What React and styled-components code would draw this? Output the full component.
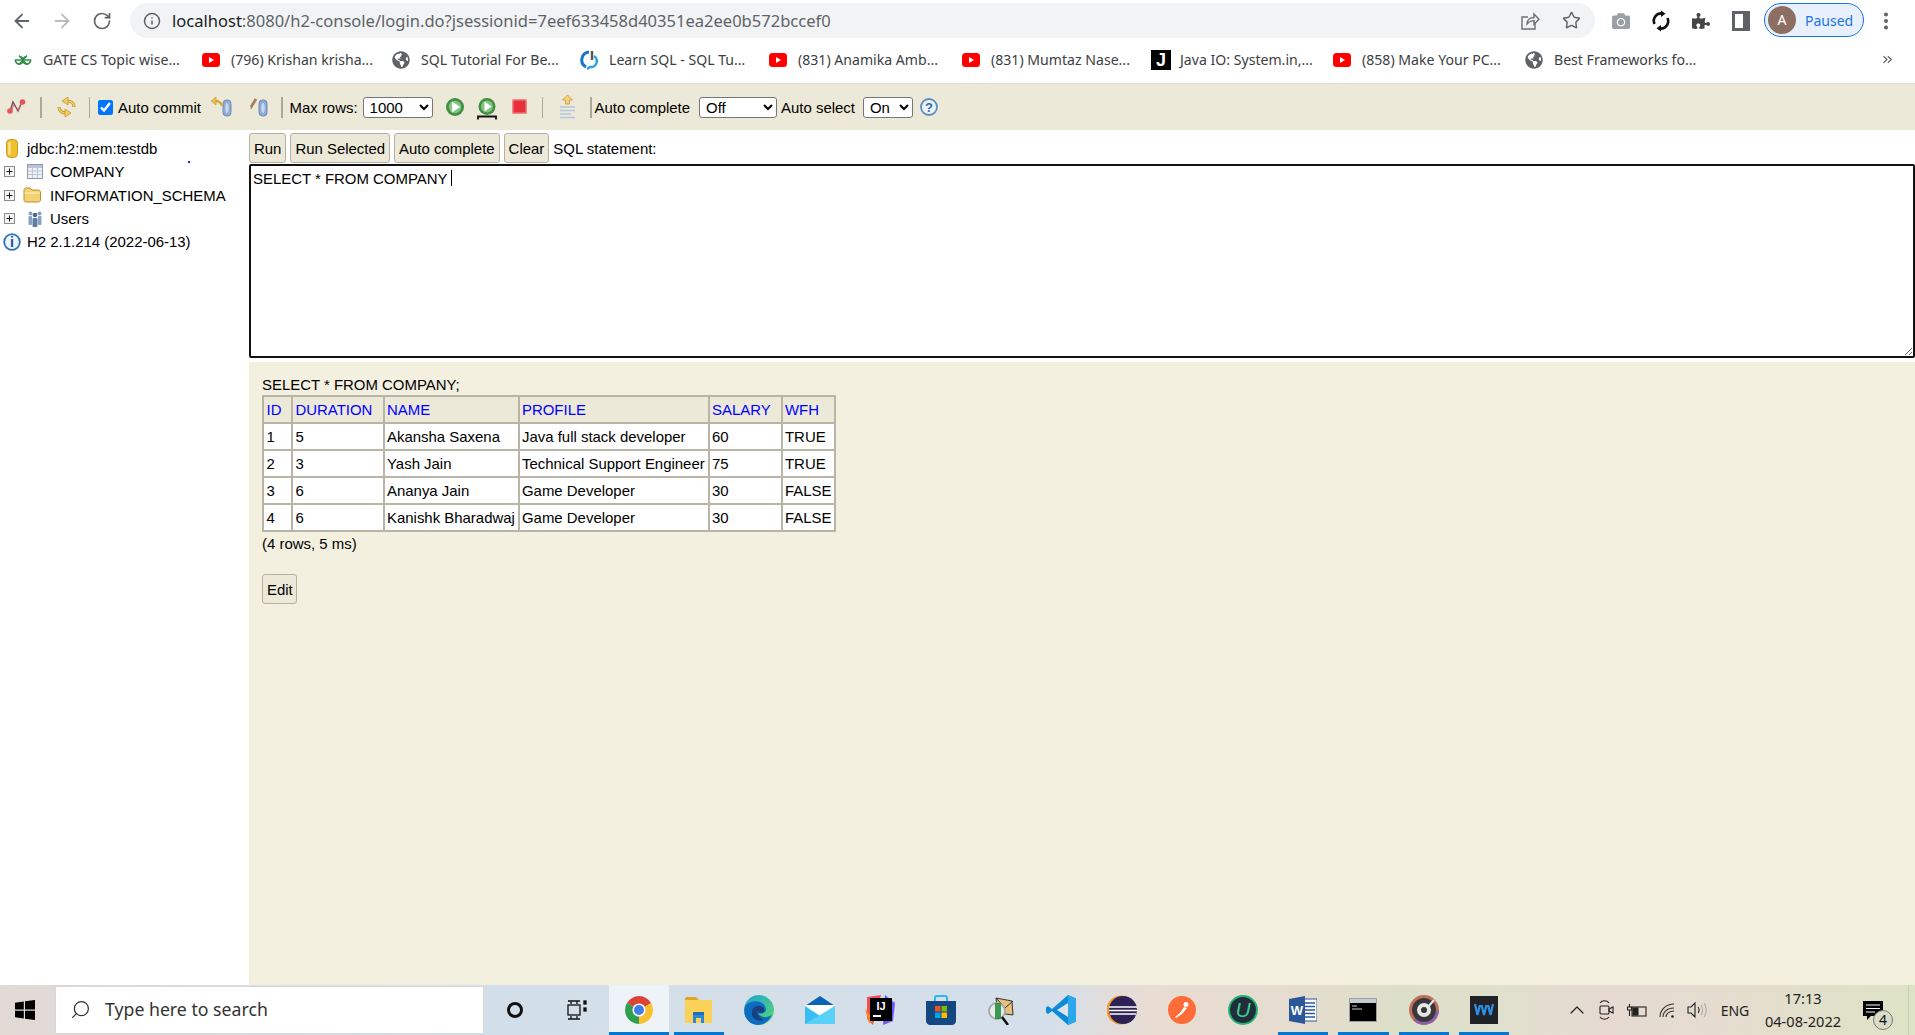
import React from 'react';
import styled, { createGlobalStyle } from 'styled-components';
import { ArrowLeft, ArrowRight, RotateCw, Info, Star, MoreVertical, ChevronUp, ChevronsRight, Search } from 'lucide-react';
import { FaGlobeAmericas, FaPuzzlePiece, FaCamera } from 'react-icons/fa';

const GlobalStyle = createGlobalStyle`
  html, body { margin: 0; padding: 0; height: 100%; background: #fff; overflow: hidden; }
  * { box-sizing: border-box; }
`;

const uiFont = `"Noto Sans", "Open Sans", sans-serif`;
const h2Font = `"Liberation Sans", Arial, sans-serif`;
const h2Size = '14.95px';

/* ---------- small drawn icons ---------- */

const YoutubeIcon = () => (
  <svg width="18" height="14" viewBox="0 0 18 14">
    <rect width="18" height="14" rx="3.5" fill="#f00" />
    <path d="M7 4l5 3-5 3z" fill="#fff" />
  </svg>
);

const GfgIcon = () => (
  <svg width="18" height="12" viewBox="0 0 18 12" fill="none" stroke="#2f8d46" strokeWidth="1.7">
    <path d="M9 6H16.5A3.8 3.8 0 1 1 12.5 2.5" />
    <path d="M9 6H1.5A3.8 3.8 0 1 0 5.5 2.5" />
    <path d="M5 10.5L13 1.5M13 10.5L5 1.5" strokeWidth="1.2" />
  </svg>
);

const LearnIcon = () => (
  <svg width="18" height="22" viewBox="0 0 18 22" fill="none">
    <path d="M9 3A8 8 0 0 0 6 18" stroke="#1976c9" strokeWidth="3" />
    <path d="M12 2V11" stroke="#555" strokeWidth="2.4" />
    <path d="M14 7A6 6 0 0 1 10 18L7 20" stroke="#29a3e0" strokeWidth="2.4" />
  </svg>
);

const JBox = styled.span`
  flex: none;
  width: 20px;
  height: 20px;
  margin-right: -2px;
  background: #000;
  color: #fff;
  font: bold 18px/20px ${h2Font};
  text-align: center;
`;

const ShareIcon = () => (
  <svg width="20" height="20" viewBox="0 0 20 20" fill="none" stroke="#6b6f73" strokeWidth="1.4">
    <path d="M15 11.5V18H2V6h6" />
    <path d="M7 13c0-4 3-6.5 7-6.5V3l5 5.3-5 5V9.6c-3 0-5 1-7 3.4z" />
  </svg>
);

const SyncIcon = () => (
  <svg width="20" height="22" viewBox="0 0 20 22" fill="none" stroke="#111" strokeWidth="2.6">
    <path d="M3.5 14A7.5 7.5 0 0 1 12 3.6" />
    <path d="M16.5 8A7.5 7.5 0 0 1 8 18.4" />
    <path d="M10 .5l4.5 3.2L10 7zM10 21.5l-4.5-3.2L10 15z" fill="#111" strokeWidth="0" />
  </svg>
);

const PanelIcon = () => (
  <svg width="18" height="20" viewBox="0 0 18 20" fill="none">
    <rect x="1.5" y="1.5" width="15" height="17" stroke="#5f6368" strokeWidth="3" />
    <rect x="11" y="2" width="5" height="16" fill="#5f6368" />
  </svg>
);

const DisconnectIcon = () => (
  <svg width="19" height="16" viewBox="0 0 19 16" fill="none">
    <path d="M3 12L6 3l5 9 4-9" stroke="#7a4a52" strokeWidth="1.4" />
    <path d="M7 6l-3 6M11 12l3-8" stroke="#d9606c" strokeWidth="1" />
    <circle cx="3" cy="12" r="2.8" fill="#e8525f" />
    <circle cx="15.5" cy="3" r="2.8" fill="#e8525f" />
  </svg>
);

const RefreshIcon = () => (
  <svg width="19" height="20" viewBox="0 0 19 20" fill="none">
    <path d="M17 10C17 6 14 4 10 4" stroke="#c9982b" strokeWidth="3.2" />
    <path d="M2 10C2 14 5 16 9 16" stroke="#c9982b" strokeWidth="3.2" />
    <path d="M17 9.5C17 6 14 4 10 4" stroke="#f3cd63" strokeWidth="1.5" />
    <path d="M2 10.5C2 14 5 16 9 16" stroke="#f3cd63" strokeWidth="1.5" />
    <path d="M11 0L5 4l6 4z" fill="#f3cd63" stroke="#b78f2a" strokeWidth=".7" />
    <path d="M8 12l6 4-6 4z" fill="#f3cd63" stroke="#b78f2a" strokeWidth=".7" />
  </svg>
);

const Cylinder = ({ x }) => (
  <g>
    <rect x={x} y="3" width="8" height="16" rx="3.5" fill="#8eabd6" stroke="#6d8cbd" strokeWidth="1" />
    <ellipse cx={x + 4} cy="11" rx="1.8" ry="5" fill="#c6d6ec" />
  </g>
);

const RollbackIcon = () => (
  <svg width="21" height="20" viewBox="0 0 21 20" fill="none">
    <Cylinder x={12} />
    <path d="M11 9C10 5 7 4 4 4" stroke="#d9ab33" strokeWidth="2.4" />
    <path d="M5 0L0 4l5 4z" fill="#eebf4c" stroke="#b78f2a" strokeWidth=".6" />
  </svg>
);

const CommitIcon = () => (
  <svg width="18" height="20" viewBox="0 0 18 20" fill="none">
    <Cylinder x={9} />
    <path d="M1 10L6 2" stroke="#a5805b" strokeWidth="2.8" />
    <path d="M1 10l-.6 2 1.8-1z" fill="#444" />
  </svg>
);

const RunIcon = () => (
  <svg width="18" height="18" viewBox="0 0 19 19">
    <circle cx="9.5" cy="9.5" r="9.5" fill="#3f9142" />
    <circle cx="9.5" cy="9.5" r="6.6" fill="#83c484" />
    <path d="M6.5 4l8 5.5-8 5.5z" fill="#fff" stroke="#e8f3e1" strokeWidth=".6" />
  </svg>
);

const RunSelectedIcon = () => (
  <svg width="20" height="22" viewBox="0 0 20 22" fill="none">
    <circle cx="10" cy="8.5" r="8.5" fill="#3f9142" />
    <circle cx="10" cy="8.5" r="6" fill="#83c484" />
    <path d="M7.5 3.5l7 5-7 5z" fill="#fff" />
    <path d="M1 21.5v-3h18v3" stroke="#111" strokeWidth="1.8" />
  </svg>
);

const StopIcon = () => (
  <svg width="15" height="15" viewBox="0 0 15 15">
    <rect width="15" height="15" rx="1.5" fill="#ec8a8a" />
    <rect x="1.5" y="1.5" width="12" height="12" fill="#e8303c" />
  </svg>
);

const HistoryIcon = () => (
  <svg width="17" height="24" viewBox="0 0 17 24" fill="none">
    <path d="M8.5 0L13.5 5h-3v4h-4V5h-3z" fill="#efd27a" stroke="#c79c33" strokeWidth=".8" />
    <path d="M1 12h15M1 15.5h15M1 19h11M1 22.5h15" stroke="#b5c6e0" strokeWidth="1.7" />
  </svg>
);

const HelpIcon = () => (
  <svg width="18" height="18" viewBox="0 0 18 18">
    <circle cx="9" cy="9" r="8" fill="#eef3fa" stroke="#5b8ec6" strokeWidth="1.8" />
    <text x="9" y="13.5" textAnchor="middle" fontFamily={h2Font} fontWeight="bold" fontSize="13" fill="#2f6aa8">?</text>
  </svg>
);

const DbIcon = () => (
  <svg width="12" height="19" viewBox="0 0 12 19">
    <rect x=".5" y=".5" width="11" height="18" rx="4" fill="#f0bf2e" stroke="#c8951c" />
    <rect x="2" y="3" width="3" height="13" rx="1" fill="#f9de7c" />
  </svg>
);

const TableIcon = () => (
  <svg width="16" height="15" viewBox="0 0 16 15" fill="none">
    <rect x=".5" y=".5" width="15" height="14" fill="#eef1f6" stroke="#8f9db3" />
    <rect x="1" y="1" width="14" height="3" fill="#b8c4d8" />
    <path d="M1 7h14M1 10.5h14M5.5 4v10M10.5 4v10" stroke="#bcc6d6" />
  </svg>
);

const FolderIcon = () => (
  <svg width="18" height="16" viewBox="0 0 18 16">
    <path d="M1 3c0-1 .6-2 2-2h4l2 2h6c1.5 0 2.5 1 2.5 2v8c0 1-1 2-2 2H3c-1.4 0-2-1-2-2z" fill="#f3d271" stroke="#b98f33" />
    <path d="M1.5 6h15" stroke="#fbe9a9" strokeWidth="1.5" />
  </svg>
);

const UsersIcon = () => (
  <svg width="16" height="17" viewBox="0 0 16 17">
    <g fill="#8ba0bd">
      <circle cx="3.5" cy="3.5" r="2" />
      <circle cx="12.5" cy="3.5" r="2" />
      <rect x="1.5" y="6" width="3.5" height="9" rx="1" />
      <rect x="11" y="6" width="3.5" height="9" rx="1" />
    </g>
    <circle cx="8" cy="5" r="2.3" fill="#486a96" />
    <rect x="5.5" y="8" width="5" height="9" rx="1" fill="#5b7da8" />
  </svg>
);

const InfoCircle = () => (
  <svg width="18" height="18" viewBox="0 0 18 18">
    <circle cx="9" cy="9" r="7.8" fill="#eef4fb" stroke="#2f74b5" strokeWidth="1.8" />
    <text x="9" y="14" textAnchor="middle" fontFamily={h2Font} fontWeight="bold" fontSize="14" fill="#164f8a">i</text>
  </svg>
);

const PlusBox = () => (
  <svg width="11" height="11" viewBox="0 0 11 11" fill="none">
    <rect x=".5" y=".5" width="10" height="10" fill="#f4f4f4" stroke="#8b8b8b" />
    <path d="M2.5 5.5h6M5.5 2.5v6" stroke="#111" />
  </svg>
);

/* taskbar */

const WindowsIcon = () => (
  <svg width="20" height="20" viewBox="0 0 20 20" fill="#000">
    <path d="M0 2.8L8.8 1.5V9.5H0zM10 1.3L20 0V9.5H10zM0 10.7H8.8V18.5L0 17.2zM10 10.7H20V20L10 18.7z" />
  </svg>
);

const ChromeIcon = () => (
  <svg width="28" height="28" viewBox="0 0 28 28">
    <path d="M14 14L1.9 7A14 14 0 0 1 26.1 7z" fill="#db4437" />
    <path d="M14 14L26.1 7A14 14 0 0 1 14 28z" fill="#fbc02d" />
    <path d="M14 14L14 28A14 14 0 0 1 1.9 7z" fill="#2e9e4f" />
    <circle cx="14" cy="14" r="6.6" fill="#fff" />
    <circle cx="14" cy="14" r="5" fill="#3d7fe8" />
  </svg>
);

const ExplorerIcon = () => (
  <svg width="28" height="26" viewBox="0 0 28 26">
    <path d="M0 2c0-1 .6-2 2-2h9l3 3H0z" fill="#e0a526" />
    <rect y="3" width="27" height="23" rx="1" fill="#fbd258" />
    <path d="M8 26V16h11v10h-3v-5h-5v5z" fill="#2b88d8" />
    <rect x="8" y="15" width="11" height="3" fill="#1f6fb5" />
  </svg>
);

const EdgeIcon = () => (
  <svg width="30" height="30" viewBox="0 0 30 30">
    <defs>
      <linearGradient id="edgeTop" x1="0" y1="0" x2="1" y2="1">
        <stop offset="0" stopColor="#1ba3d6" />
        <stop offset="1" stopColor="#5fd96a" />
      </linearGradient>
    </defs>
    <circle cx="15" cy="15" r="15" fill="url(#edgeTop)" />
    <path d="M1 12C3 5 20 3 22 14c.6 4-5 5-8 4.5 3 4 9 5 14 1C25 27 19 30 14 30 5 30-2 21 1 12z" fill="#0c6cc0" />
    <path d="M8 20c-1-6 3-10 8-9 3 .6 5 3 4 6-3 2-6 0-7-1 0 3 3 8 7 9-6 2-11-1-12-5z" fill="#1a3f80" />
  </svg>
);

const MailIcon = () => (
  <svg width="30" height="28" viewBox="0 0 30 28">
    <path d="M0 10L15 0l15 10v4H0z" fill="#0b63b6" />
    <rect y="10" width="30" height="18" fill="#36bdf2" />
    <path d="M0 10l15 10 15-10v-1H0z" fill="#fff" />
    <path d="M0 28l30-18v18z" fill="#58d0f7" />
  </svg>
);

const IntellijIcon = () => (
  <svg width="30" height="30" viewBox="0 0 30 30">
    <path d="M2 2L16 0 8 30 2 24z" fill="#f25050" />
    <path d="M20 0l10 8-2 18-10 4z" fill="#6b57ff" />
    <path d="M0 14L10 26l-6 2z" fill="#fc801d" />
    <rect x="5" y="3" width="22" height="23" fill="#000" />
    <text x="16" y="15" textAnchor="middle" fontFamily={h2Font} fontWeight="bold" fontSize="11" fill="#fff">IJ</text>
    <rect x="8" y="20" width="8" height="2" fill="#fff" />
  </svg>
);

const StoreIcon = () => (
  <svg width="30" height="30" viewBox="0 0 30 30">
    <path d="M9 7V3c0-1 1-2 2-2h8c1 0 2 1 2 2v4" fill="none" stroke="#2fb6f0" strokeWidth="2" />
    <path d="M0 6h30v20c0 2-2 4-4 4H4c-2 0-4-2-4-4z" fill="#14467f" />
    <rect x="9" y="11" width="5.5" height="5.5" fill="#f25022" />
    <rect x="15.5" y="11" width="5.5" height="5.5" fill="#7fba00" />
    <rect x="9" y="17.5" width="5.5" height="5.5" fill="#00a4ef" />
    <rect x="15.5" y="17.5" width="5.5" height="5.5" fill="#ffb900" />
  </svg>
);

const SnifferIcon = () => (
  <svg width="30" height="30" viewBox="0 0 30 30">
    <path d="M10 3l16 3 1 14-15-2z" fill="#e8c078" stroke="#333" />
    <path d="M10 3l9 10 8-7" fill="none" stroke="#333" />
    <circle cx="11" cy="16" r="8" fill="#e8ece8" stroke="#aaa" strokeWidth="2" />
    <path d="M9 8h6v16H9z" fill="#1f8a3a" opacity=".85" />
    <path d="M16 22l6 8" stroke="#111" strokeWidth="2.5" />
  </svg>
);

const VscodeIcon = () => (
  <svg width="30" height="30" viewBox="0 0 30 30">
    <path d="M22 0l8 3.5v23L22 30 6 16l-4 3-2-1.5V12.5L2 11l4 3z" fill="#0d8bd9" />
    <path d="M22 0l8 3.5v23L22 30z" fill="#2aa7ed" />
    <path d="M22 8L11 15l11 7z" fill="#dfe4ec" />
  </svg>
);

const EclipseIcon = () => (
  <svg width="30" height="30" viewBox="0 0 30 30">
    <circle cx="14" cy="15" r="14.5" fill="#f1992d" />
    <circle cx="16" cy="15" r="14" fill="#2c2255" />
    <path d="M2 12h28M2 15.5h28M3 19h26" stroke="#fff" strokeWidth="1.7" />
  </svg>
);

const PostmanIcon = () => (
  <svg width="28" height="28" viewBox="0 0 28 28">
    <circle cx="14" cy="14" r="14" fill="#ff6c37" />
    <circle cx="18" cy="8.5" r="2.5" fill="#fff" />
    <path d="M16 11l-4 6-5 4 1 1 6-4 5-6z" fill="#fff" />
  </svg>
);

const UltraIcon = () => (
  <svg width="30" height="30" viewBox="0 0 30 30">
    <circle cx="15" cy="15" r="14" fill="#222c3a" stroke="#1fb574" strokeWidth="2" />
    <text x="15" y="22" textAnchor="middle" fontFamily={h2Font} fontStyle="italic" fontSize="21" fill="#35d08a">U</text>
  </svg>
);

const WordIcon = () => (
  <svg width="28" height="28" viewBox="0 0 28 28">
    <rect x="12" y="3" width="16" height="22" fill="#fff" stroke="#2b579a" />
    <path d="M15 7h11M15 10.5h11M15 14h11M15 17.5h11M15 21h11" stroke="#2b579a" strokeWidth="1.5" />
    <path d="M0 3L16 0v28L0 25z" fill="#2b579a" />
    <text x="8" y="19" textAnchor="middle" fontFamily={h2Font} fontWeight="bold" fontSize="13" fill="#fff">W</text>
  </svg>
);

const CmdIcon = () => (
  <svg width="28" height="24" viewBox="0 0 28 24">
    <rect width="28" height="24" fill="#9aa0a6" />
    <rect x="1" y="5" width="26" height="18" fill="#000" />
    <rect x="1" y="1" width="26" height="4" fill="#c7ccd1" />
    <path d="M3 8h5M3 11h10" stroke="#ccc" />
  </svg>
);

const DiscIcon = () => (
  <svg width="30" height="30" viewBox="0 0 30 30">
    <circle cx="15" cy="15" r="15" fill="#c0705a" />
    <path d="M30 15A15 15 0 0 1 4 25z" fill="#8e5fa8" />
    <circle cx="15" cy="15" r="12" fill="#38383c" />
    <circle cx="15" cy="15" r="7" fill="#e6e6e6" />
    <circle cx="15" cy="15" r="3" fill="#333" />
    <path d="M19 12l6-7" stroke="#e6e6e6" strokeWidth="2" />
  </svg>
);

const WavesIcon = () => (
  <svg width="28" height="28" viewBox="0 0 28 28">
    <rect width="28" height="28" fill="#202226" />
    <path d="M5 8l2.5 11L10 9M11.5 9l2.5 10 2.5-10M18 9l2.5 10L23 8" fill="none" stroke="#2d8fe8" strokeWidth="2.2" />
  </svg>
);

const CortanaRing = styled.span`
  width: 16px;
  height: 16px;
  border: 3px solid #111;
  border-radius: 50%;
`;

const TaskViewIcon = () => (
  <svg width="20" height="20" viewBox="0 0 20 20" fill="none" stroke="#111" strokeWidth="1.3">
    <path d="M1 1h12M1 19h12M4 1v3M10 1v3M4 16v3M10 16v3" />
    <rect x="1" y="5" width="12" height="10" />
    <rect x="17" y="1" width="2" height="3" fill="#111" />
    <rect x="17" y="8" width="2" height="3" fill="#111" />
  </svg>
);

const CameraTray = () => (
  <svg width="16" height="22" viewBox="0 0 16 22" fill="none" stroke="#222" strokeWidth="1.1">
    <rect x="1" y="7" width="9" height="8" rx="1" />
    <path d="M10 10l4-2v6l-4-2zM1 4c2-3 7-3 9 0M1 18c2 3 7 3 9 0" />
  </svg>
);

const BatteryTray = () => (
  <svg width="20" height="13" viewBox="0 0 20 13" fill="none" stroke="#222" strokeWidth="1.1">
    <rect x="5" y="3" width="14" height="9" />
    <rect x="6" y="4" width="5" height="7" fill="#222" />
    <path d="M2.5 0v3M.5 3h4v3h-4zM2.5 6v6" />
  </svg>
);

const WifiTray = () => (
  <svg width="16" height="15" viewBox="0 0 16 15" fill="none" stroke="#333" strokeWidth="1.1">
    <path d="M1 14C1 7 7 1 15 1" />
    <path d="M4 14c0-5 4-9 11-9" />
    <path d="M7 14c0-3 3-6 8-6" />
    <circle cx="13.5" cy="13.5" r="1.3" fill="#222" stroke="none" />
  </svg>
);

const VolumeTray = () => (
  <svg width="21" height="18" viewBox="0 0 21 18" fill="none" stroke="#222" strokeWidth="1.1">
    <path d="M1 6h3l4-4v14l-4-4H1z" />
    <path d="M11 6c1.5 2 1.5 4 0 6" />
    <path d="M14 4c2 3 2 7 0 10M17 2c3 4 3 10 0 14" stroke="#aaa" />
  </svg>
);

const BubbleIcon = () => (
  <svg width="20" height="19" viewBox="0 0 20 19">
    <path d="M0 0h20v15H8l-4 4v-4H0z" fill="#000" />
    <path d="M3 4h14M3 7.5h14M3 11h9" stroke="#fff" strokeWidth="1" />
  </svg>
);

/* ---------- layout ---------- */

const Page = styled.div`
  width: 1915px;
  height: 1035px;
  display: flex;
  flex-direction: column;
  overflow: hidden;
  background: #fff;
`;

const BrowserBar = styled.div`
  height: 41px;
  flex: none;
  display: flex;
  align-items: flex-start;
  padding: 3px 0 0 2px;
  font-family: ${uiFont};
`;

const NavButton = styled.span`
  width: 40px;
  height: 35px;
  flex: none;
  display: flex;
  align-items: center;
  justify-content: center;
  color: ${(p) => p.$color || '#5f6368'};
`;

const MoreButton = styled(NavButton)`
  margin-left: 2px;
`;

const AddressPill = styled.div`
  width: 1465px;
  height: 35px;
  flex: none;
  margin: 0 6px 0 8px;
  padding: 0 14px 0 13px;
  border-radius: 18px;
  background: #f1f3f4;
  display: flex;
  align-items: center;
  color: #5f6368;
`;

const UrlText = styled.span`
  margin-left: 11px;
  font-size: 16.55px;
  color: #5f6368;
  white-space: nowrap;

  b {
    font-weight: 400;
    color: #202124;
  }
`;

const PillActions = styled.span`
  margin-left: auto;
  display: flex;
  align-items: center;
  gap: 22px;
`;

const ProfilePill = styled.div`
  width: 100px;
  height: 34px;
  flex: none;
  margin-left: 3px;
  border: 1.5px solid #1a73e8;
  border-radius: 17px;
  background: #e8f0fe;
  display: flex;
  align-items: center;
  padding-left: 3px;
  color: #1a73e8;
  font-size: 14px;
`;

const Avatar = styled.span`
  width: 28px;
  height: 28px;
  border-radius: 50%;
  background: #8d6e63;
  color: #fff;
  font-size: 14px;
  line-height: 28px;
  text-align: center;
  margin-right: 9px;
`;

const BookmarkBar = styled.div`
  height: 43px;
  flex: none;
  display: flex;
  align-items: center;
  padding: 0 0 5px 14px;
  border-bottom: 1px solid #dcdcdc;
  font-family: ${uiFont};
`;

const Bookmark = styled.div`
  width: ${(p) => p.$w}px;
  flex: none;
  display: flex;
  align-items: center;
  font-size: 14.1px;
  color: #3c4043;
  white-space: nowrap;
`;

const BookmarkIcon = styled.span`
  width: 18px;
  margin-right: 11px;
  flex: none;
  display: flex;
  align-items: center;
  justify-content: center;
`;

const MoreBookmarks = styled.span`
  margin-left: auto;
  margin-right: 20px;
  display: flex;
  color: #5f6368;
`;

const H2Toolbar = styled.div`
  height: 46px;
  flex: none;
  background: #ece9d8;
  display: flex;
  align-items: center;
  font: ${h2Size} ${h2Font};
  color: #000;
`;

const ToolIcon = styled.span`
  flex: none;
  width: ${(p) => p.$w}px;
  margin-left: ${(p) => p.$ml}px;
  margin-top: ${(p) => p.$mt || 0}px;
  display: flex;
  align-items: center;
  justify-content: center;
`;

const ToolSep = styled.span`
  flex: none;
  width: 1.5px;
  height: 21px;
  margin-left: ${(p) => p.$ml}px;
  background: #aca899;
`;

const ToolLabel = styled.label`
  flex: none;
  margin-left: ${(p) => p.$ml}px;
  white-space: nowrap;
`;

const AutoCommit = styled.input`
  width: 15px;
  height: 15px;
  margin: 0 0 0 ${(p) => p.$ml}px;
  flex: none;
`;

const ToolSelect = styled.select`
  flex: none;
  width: ${(p) => p.$w}px;
  height: 21px;
  margin-left: ${(p) => p.$ml}px;
  padding: 0 0 0 2px;
  border: 1px solid #767676;
  border-radius: 3px;
  background: #fff;
  font: ${h2Size} ${h2Font};
  color: #000;
`;

const Body = styled.div`
  flex: 1;
  min-height: 0;
  display: flex;
`;

const Sidebar = styled.aside`
  width: 249px;
  flex: none;
  position: relative;
  padding-top: 7px;
  background: #fff;
  font: ${h2Size} ${h2Font};
  color: #000;
`;

const TreeRow = styled.div`
  height: 23.25px;
  display: flex;
  align-items: center;
  white-space: nowrap;
`;

const TreeIcon = styled.span`
  flex: none;
  width: ${(p) => p.$w}px;
  margin-left: ${(p) => p.$ml || 0}px;
  margin-right: ${(p) => p.$mr || 0}px;
  display: flex;
  align-items: center;
  justify-content: center;
`;

const StrayDot = styled.span`
  position: absolute;
  left: 188px;
  top: 31px;
  width: 2px;
  height: 2px;
  background: #2222cc;
`;

const Main = styled.main`
  flex: 1;
  min-width: 0;
  display: flex;
  flex-direction: column;
  font: ${h2Size} ${h2Font};
  color: #000;
`;

const QueryPane = styled.div`
  height: 232px;
  flex: none;
  background: #fff;
  padding-top: 3px;
`;

const ButtonRow = styled.div`
  height: 31px;
  display: flex;
  align-items: flex-start;
  gap: 4px;
`;

const FormButton = styled.button`
  height: 30px;
  padding: 0 4px;
  border: 1px solid #b5b1a2;
  border-radius: 3px;
  background: #ece9d8;
  font: ${h2Size} ${h2Font};
  color: #000;
`;

const RowCaption = styled.span`
  align-self: center;
`;

const SqlBox = styled.div`
  height: 194px;
  border: 2px solid #111;
  border-radius: 2px;
  padding: 4px 2px;
  background: #fff;
  overflow: hidden;
  resize: vertical;
  line-height: 17px;
`;

const Caret = styled.span`
  display: inline-block;
  width: 1px;
  height: 16px;
  margin-left: 3px;
  background: #000;
  vertical-align: top;
`;

const ResultPane = styled.div`
  flex: 1;
  background: #f4f0e0;
  padding: 14px 0 0 13px;
`;

const ResultLine = styled.div`
  height: 17px;
  line-height: 17px;
`;

const ResultTable = styled.table`
  margin-top: 2px;
  border-collapse: collapse;
  table-layout: fixed;
  width: 572px;
`;

const HeadCell = styled.th`
  height: 27px;
  padding: 0 0 1px 2.5px;
  border: 2px solid #b8b4a6;
  background: #ece9d8;
  font-weight: 400;
  text-align: left;
  color: #0000ff;
  white-space: nowrap;
`;

const DataCell = styled.td`
  height: 27px;
  padding: 0 0 0 2.5px;
  border: 2px solid #b8b4a6;
  background: #fff;
  white-space: nowrap;
`;

const RowCount = styled.div`
  margin-top: 3px;
  height: 17px;
  line-height: 17px;
`;

const EditButton = styled(FormButton)`
  display: block;
  margin-top: 22px;
  width: 35px;
`;

const Taskbar = styled.footer`
  height: 50px;
  flex: none;
  display: flex;
  align-items: stretch;
  background: linear-gradient(90deg, #e2d9d4 0, #e0dad6 50px, #d3dfe8 480px, #d5dfe9 1050px, #e9dcd2 1150px, #e6dcd0 1280px, #dcdfc8 1400px, #dfe0cd 1500px, #e6dad2 1600px, #e5dccf 1720px, #dde3c5 1915px);
  font-family: ${uiFont};
  color: #222;
`;

const StartButton = styled.span`
  width: 55px;
  flex: none;
  padding-right: 5px;
  display: flex;
  align-items: center;
  justify-content: center;
`;

const SearchBox = styled.div`
  width: 429px;
  flex: none;
  margin: 1px 0;
  padding: 0 0 2px 14px;
  background: #fff;
  border: 1px solid #d8d8d8;
  display: flex;
  align-items: center;
  font-size: 17.7px;
  color: #333;
`;

const SearchGlass = styled(Search)`
  transform: scaleX(-1);
`;

const SearchLabel = styled.span`
  margin-left: 14px;
`;

const BarSlot = styled.span`
  width: ${(p) => p.$w || 60.4}px;
  flex: none;
  display: flex;
  align-items: center;
  justify-content: center;
  position: relative;
  background: ${(p) => (p.$active ? '#eef3f8' : 'transparent')};

  &::after {
    content: '';
    display: ${(p) => (p.$open ? 'block' : 'none')};
    position: absolute;
    left: ${(p) => (p.$active ? 0 : 5)}px;
    right: ${(p) => (p.$active ? 0 : 5)}px;
    bottom: 0;
    height: 3px;
    background: #0078d4;
  }
`;

const Tray = styled.div`
  margin-left: auto;
  display: flex;
  align-items: center;
  padding-right: 6px;
`;

const TraySlot = styled.span`
  width: 30px;
  flex: none;
  display: flex;
  align-items: center;
  justify-content: center;
`;

const TrayText = styled.span`
  width: 42px;
  margin-left: 2px;
  flex: none;
  text-align: center;
  font-size: 14px;
  color: #222;
`;

const Clock = styled.div`
  width: 92px;
  margin-left: 1px;
  flex: none;
  text-align: center;
  font-size: 14.6px;
  line-height: 23px;
`;

const NotifySlot = styled.span`
  width: 58px;
  height: 50px;
  margin-left: 2px;
  padding-right: 13px;
  flex: none;
  display: flex;
  align-items: center;
  justify-content: center;
  position: relative;
  border-right: 1px solid #c8ccb8;
`;

const NotifyBadge = styled.span`
  position: absolute;
  left: 22px;
  top: 25px;
  width: 20px;
  height: 20px;
  border-radius: 50%;
  border: 1.5px solid #777;
  background: #d9ddc8;
  font-size: 14px;
  line-height: 17px;
  text-align: center;
  color: #111;
`;

const bookmarks = [
  { w: 188, icon: <GfgIcon />, text: 'GATE CS Topic wise...' },
  { w: 190, icon: <YoutubeIcon />, text: '(796) Krishan krisha...' },
  { w: 188, icon: <FaGlobeAmericas size={18} color="#5f6368" />, text: 'SQL Tutorial For Be...' },
  { w: 189, icon: <LearnIcon />, text: 'Learn SQL - SQL Tu...' },
  { w: 193, icon: <YoutubeIcon />, text: '(831) Anamika Amb...' },
  { w: 189, icon: <YoutubeIcon />, text: '(831) Mumtaz Nase...' },
  { w: 182, icon: <JBox>J</JBox>, text: 'Java IO: System.in,...' },
  { w: 192, icon: <YoutubeIcon />, text: '(858) Make Your PC...' },
  { w: 189, icon: <FaGlobeAmericas size={18} color="#5f6368" />, text: 'Best Frameworks fo...' },
];

const columns = [
  ['ID', 29], ['DURATION', 91.5], ['NAME', 135], ['PROFILE', 190], ['SALARY', 73], ['WFH', 53.5],
];

const rows = [
  [1, 5, 'Akansha Saxena', 'Java full stack developer', 60, 'TRUE'],
  [2, 3, 'Yash Jain', 'Technical Support Engineer', 75, 'TRUE'],
  [3, 6, 'Ananya Jain', 'Game Developer', 30, 'FALSE'],
  [4, 6, 'Kanishk Bharadwaj', 'Game Developer', 30, 'FALSE'],
];

const apps = [
  { icon: <ChromeIcon />, open: true, active: true },
  { icon: <ExplorerIcon />, open: true },
  { icon: <EdgeIcon /> },
  { icon: <MailIcon /> },
  { icon: <IntellijIcon /> },
  { icon: <StoreIcon /> },
  { icon: <SnifferIcon /> },
  { icon: <VscodeIcon /> },
  { icon: <EclipseIcon /> },
  { icon: <PostmanIcon /> },
  { icon: <UltraIcon /> },
  { icon: <WordIcon />, open: true },
  { icon: <CmdIcon />, open: true },
  { icon: <DiscIcon />, open: true },
  { icon: <WavesIcon />, open: true },
];

function App() {
  return (
    <Page>
      <GlobalStyle />

      <BrowserBar>
        <NavButton><ArrowLeft size={22} strokeWidth={2} /></NavButton>
        <NavButton $color="#b9bcc0"><ArrowRight size={22} strokeWidth={2} /></NavButton>
        <NavButton><RotateCw size={20} strokeWidth={2} /></NavButton>
        <AddressPill>
          <Info size={18} strokeWidth={2} />
          <UrlText><b>localhost</b>:8080/h2-console/login.do?jsessionid=7eef633458d40351ea2ee0b572bccef0</UrlText>
          <PillActions>
            <ShareIcon />
            <Star size={19} strokeWidth={1.8} />
          </PillActions>
        </AddressPill>
        <NavButton $color="#9aa0a6"><FaCamera size={18} /></NavButton>
        <NavButton><SyncIcon /></NavButton>
        <NavButton $color="#444"><FaPuzzlePiece size={18} /></NavButton>
        <NavButton><PanelIcon /></NavButton>
        <ProfilePill>
          <Avatar>A</Avatar>
          Paused
        </ProfilePill>
        <MoreButton><MoreVertical size={22} strokeWidth={2.4} /></MoreButton>
      </BrowserBar>

      <BookmarkBar>
        {bookmarks.map((b) => (
          <Bookmark key={b.text} $w={b.w}>
            <BookmarkIcon>{b.icon}</BookmarkIcon>
            {b.text}
          </Bookmark>
        ))}
        <MoreBookmarks><ChevronsRight size={15} /></MoreBookmarks>
      </BookmarkBar>

      <H2Toolbar>
        <ToolIcon $w={19} $ml={7}><DisconnectIcon /></ToolIcon>
        <ToolSep $ml={14} />
        <ToolIcon $w={19} $ml={15}><RefreshIcon /></ToolIcon>
        <ToolSep $ml={13} />
        <AutoCommit type="checkbox" defaultChecked $ml={8} />
        <ToolLabel $ml={5}>Auto commit</ToolLabel>
        <ToolIcon $w={21} $ml={10}><RollbackIcon /></ToolIcon>
        <ToolIcon $w={18} $ml={18}><CommitIcon /></ToolIcon>
        <ToolSep $ml={13} />
        <ToolLabel $ml={7}>Max rows:</ToolLabel>
        <ToolSelect $w={70} $ml={5} defaultValue="1000">
          <option>1000</option>
        </ToolSelect>
        <ToolIcon $w={19} $ml={13}><RunIcon /></ToolIcon>
        <ToolIcon $w={20} $ml={12} $mt={3}><RunSelectedIcon /></ToolIcon>
        <ToolIcon $w={15} $ml={15} $mt={-2}><StopIcon /></ToolIcon>
        <ToolSep $ml={15} />
        <ToolIcon $w={17} $ml={16}><HistoryIcon /></ToolIcon>
        <ToolSep $ml={14} />
        <ToolLabel $ml={3}>Auto complete</ToolLabel>
        <ToolSelect $w={78} $ml={9} defaultValue="Off">
          <option>Off</option>
          <option>On</option>
        </ToolSelect>
        <ToolLabel $ml={4}>Auto select</ToolLabel>
        <ToolSelect $w={50} $ml={8} defaultValue="On">
          <option>On</option>
          <option>Off</option>
        </ToolSelect>
        <ToolIcon $w={18} $ml={7}><HelpIcon /></ToolIcon>
      </H2Toolbar>

      <Body>
        <Sidebar>
          <StrayDot />
          <TreeRow>
            <TreeIcon $w={12} $ml={6} $mr={9}><DbIcon /></TreeIcon>
            jdbc:h2:mem:testdb
          </TreeRow>
          <TreeRow>
            <TreeIcon $w={11} $ml={4}><PlusBox /></TreeIcon>
            <TreeIcon $w={16} $ml={12} $mr={7}><TableIcon /></TreeIcon>
            COMPANY
          </TreeRow>
          <TreeRow>
            <TreeIcon $w={11} $ml={4}><PlusBox /></TreeIcon>
            <TreeIcon $w={18} $ml={8} $mr={9}><FolderIcon /></TreeIcon>
            INFORMATION_SCHEMA
          </TreeRow>
          <TreeRow>
            <TreeIcon $w={11} $ml={4}><PlusBox /></TreeIcon>
            <TreeIcon $w={16} $ml={12} $mr={7}><UsersIcon /></TreeIcon>
            Users
          </TreeRow>
          <TreeRow>
            <TreeIcon $w={18} $ml={3} $mr={6}><InfoCircle /></TreeIcon>
            H2 2.1.214 (2022-06-13)
          </TreeRow>
        </Sidebar>

        <Main>
          <QueryPane>
            <ButtonRow>
              <FormButton>Run</FormButton>
              <FormButton>Run Selected</FormButton>
              <FormButton>Auto complete</FormButton>
              <FormButton>Clear</FormButton>
              <RowCaption>SQL statement:</RowCaption>
            </ButtonRow>
            <SqlBox>SELECT * FROM COMPANY<Caret /></SqlBox>
          </QueryPane>

          <ResultPane>
            <ResultLine>SELECT * FROM COMPANY;</ResultLine>
            <ResultTable>
              <colgroup>
                {columns.map(([name, width]) => <col key={name} width={width} />)}
              </colgroup>
              <thead>
                <tr>
                  {columns.map(([name]) => <HeadCell key={name}>{name}</HeadCell>)}
                </tr>
              </thead>
              <tbody>
                {rows.map((row) => (
                  <tr key={row[0]}>
                    {row.map((value, i) => <DataCell key={i}>{value}</DataCell>)}
                  </tr>
                ))}
              </tbody>
            </ResultTable>
            <RowCount>(4 rows, 5 ms)</RowCount>
            <EditButton>Edit</EditButton>
          </ResultPane>
        </Main>
      </Body>

      <Taskbar>
        <StartButton><WindowsIcon /></StartButton>
        <SearchBox>
          <SearchGlass size={21} strokeWidth={1.4} />
          <SearchLabel>Type here to search</SearchLabel>
        </SearchBox>
        <BarSlot $w={62}><CortanaRing /></BarSlot>
        <BarSlot $w={62.5}><TaskViewIcon /></BarSlot>
        {apps.map((app, i) => (
          <BarSlot key={i} $open={app.open} $active={app.active}>{app.icon}</BarSlot>
        ))}
        <Tray>
          <TraySlot><ChevronUp size={24} strokeWidth={1.2} /></TraySlot>
          <TraySlot><CameraTray /></TraySlot>
          <TraySlot><BatteryTray /></TraySlot>
          <TraySlot><WifiTray /></TraySlot>
          <TraySlot><VolumeTray /></TraySlot>
          <TrayText>ENG</TrayText>
          <Clock>17:13<br />04-08-2022</Clock>
          <NotifySlot>
            <BubbleIcon />
            <NotifyBadge>4</NotifyBadge>
          </NotifySlot>
        </Tray>
      </Taskbar>
    </Page>
  );
}

export default App;
